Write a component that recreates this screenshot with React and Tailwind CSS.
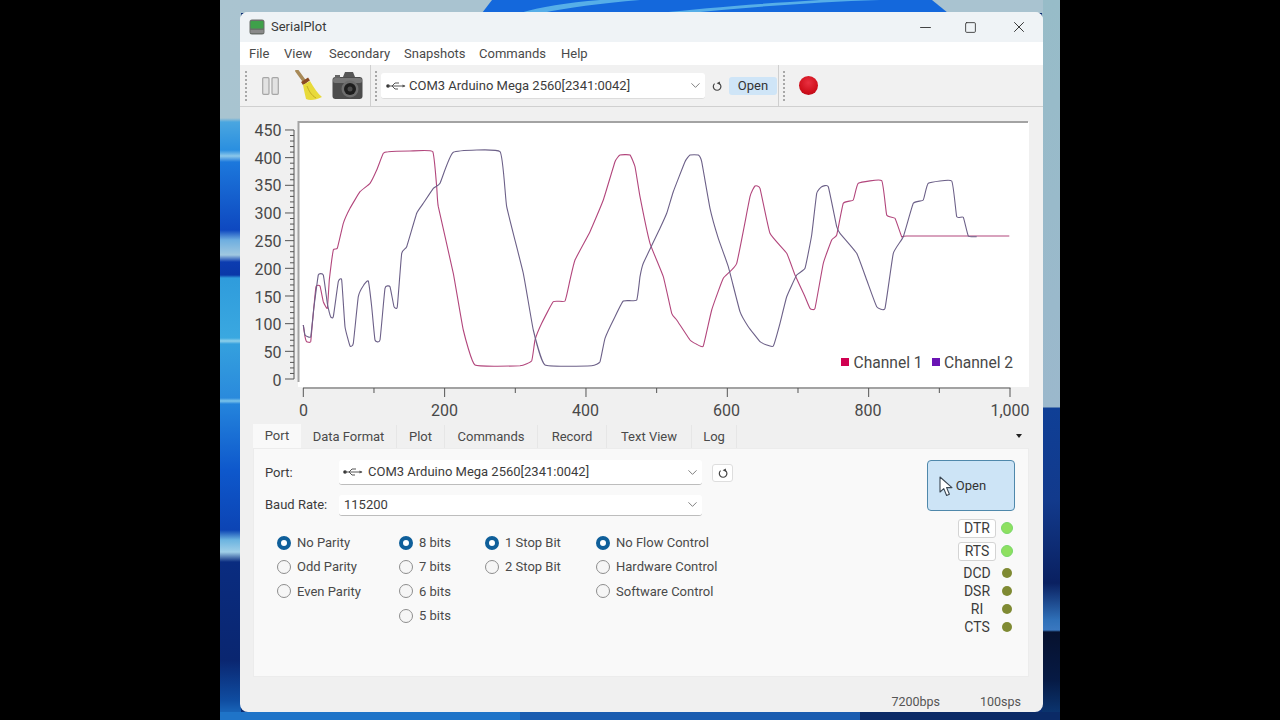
import React from "react";
import { Minus, Square, X, ChevronDown } from "lucide-react";

const z3 = (a) => a.map(([x, y]) => [x / 3 + 240, y / 3 + 120]);
const z4 = (a) => a.map(([x, y]) => [x / 3 + 640, y / 3 + 120]);

function smooth(p) {
  let d = `M${p[0][0].toFixed(1)} ${p[0][1].toFixed(1)}`;
  const k = 0.06;
  for (let i = 0; i < p.length - 1; i++) {
    const a = p[i - 1] || p[i];
    const b = p[i];
    const c = p[i + 1];
    const e = p[i + 2] || c;
    const c1x = b[0] + (c[0] - a[0]) * k;
    const c1y = b[1] + (c[1] - a[1]) * k;
    const c2x = c[0] - (e[0] - b[0]) * k;
    const c2y = c[1] - (e[1] - b[1]) * k;
    d += `C${c1x.toFixed(1)} ${c1y.toFixed(1)} ${c2x.toFixed(1)} ${c2y.toFixed(1)} ${c[0].toFixed(1)} ${c[1].toFixed(1)}`;
  }
  return d;
}

const ch1 = smooth([
  ...z3([[190,615],[195,650],[200,665],[212,665],[218,600],[228,500],[240,498],[250,545],[262,565],[268,480],[280,390],[292,385],[310,310],[330,265],[360,215],[390,190],[410,150],[430,100],[445,95],[510,93],[578,95],[590,200],[595,260],[640,460],[670,630],[705,735],[840,737],[875,722],[885,660],[905,610],[940,545],[975,543],[990,480],[1005,420],[1050,335],[1090,240],[1125,125],[1140,105],[1170,105],[1185,140]]),
  ...z4([[0,230],[30,370],[70,470],[95,580],[110,600],[150,660],[170,673],[190,678],[215,570],[250,475],[290,430],[330,230],[345,198],[360,205],[390,340],[440,400],[465,465],[495,530],[510,565],[525,565],[550,430],[575,360],[590,345],[610,250],[640,240],[655,190],[725,182],[740,285],[765,295],[785,350],[800,348],[1108,348]]),
]);
const ch2 = smooth([
  ...z3([[190,615],[195,645],[212,650],[222,560],[235,465],[250,465],[262,550],[272,590],[280,590],[295,485],[305,480],[315,620],[330,678],[340,670],[355,530],[370,497],[385,483],[395,560],[405,660],[420,660],[435,505],[450,500],[462,560],[472,560],[485,400],[500,380],[530,280],[550,250],[580,205],[600,190],[640,97],[780,95],[800,260],[850,460],[880,630],[915,735],[1055,737],[1080,725],[1095,655],[1125,590],[1150,543],[1190,540]]),
  ...z4([[0,470],[10,430],[60,325],[80,280],[100,215],[135,125],[150,105],[175,105],[185,125],[210,265],[235,355],[265,440],[300,575],[325,620],[360,665],[380,675],[400,678],[420,610],[440,530],[470,465],[495,445],[515,345],[530,220],[545,200],[565,200],[590,320],[600,340],[650,400],[680,480],[710,560],[735,565],[760,400],[790,350],[820,250],[850,240],[865,190],[935,183],[950,290],[970,292],[985,348],[1010,350]]),
]);

const FONT = "Roboto, sans-serif";

function Chart() {
  const yt = [];
  for (let i = 0; i <= 45; i++) {
    const y = 379 - (i * 27.67) / 5;
    yt.push(<line key={i} x1={i % 5 === 0 ? 285 : 290} x2={294} y1={y} y2={y} stroke="#555" strokeWidth="1" />);
  }
  const xt = [];
  for (let i = 0; i <= 10; i++) {
    const x = 303.3 + i * 70.67;
    xt.push(<line key={i} x1={x} x2={x} y1={388} y2={i % 2 === 0 ? 397 : 393} stroke="#555" strokeWidth="1" />);
  }
  return (
    <svg width="803" height="318" viewBox="240 107 803 318" className="block">
      <rect x="298" y="122" width="731" height="265" fill="#fff" />
      <path d="M298.5 382V122H1028" fill="none" stroke="#a3a3a3" strokeWidth="2" />
      <line x1="294" x2="294" y1="130" y2="379" stroke="#555" />
      {yt}
      <line x1="303" x2="1010.5" y1="388" y2="388" stroke="#555" />
      {xt}
      <g fontFamily={FONT} fontSize="16" fill="#484848">
        {[0, 50, 100, 150, 200, 250, 300, 350, 400, 450].map((v, i) => (
          <text key={v} x="281.5" y={380 - i * 27.8 + 6} textAnchor="end">{v}</text>
        ))}
        {[[0, 303.5], [200, 444.5], [400, 585.5], [600, 726.5], [800, 868], [1000, 1010]].map(([v, x]) => (
          <text key={v} x={x} y="416" textAnchor="middle">{v === 1000 ? "1,000" : v}</text>
        ))}
        <text x="853.5" y="368" fontSize="15.6">Channel 1</text>
        <text x="944" y="368" fontSize="15.6">Channel 2</text>
      </g>
      <path d={ch1} fill="none" stroke="#b2467c" strokeWidth="1.1" strokeLinejoin="round" />
      <path d={ch2} fill="none" stroke="#6c6088" strokeWidth="1.1" strokeLinejoin="round" />
      <rect x="841" y="358" width="8" height="8" fill="#d00050" />
      <rect x="932" y="358" width="8" height="8" fill="#6a14b4" />
    </svg>
  );
}

const leftStops = [
  [0,"#aac4d0"],[118,"#a8c4d0"],[122,"#4aa6e0"],[150,"#2a8fe0"],[156,"#8cc8ea"],[162,"#1c78dc"],[230,"#0e48c0"],[240,"#6eaee0"],[255,"#a0c8e0"],[262,"#0c3cb0"],[275,"#0a38a8"],[278,"#2f9cdc"],[338,"#3aa8e0"],[341,"#8fd0ea"],[344,"#34a0de"],[398,"#2a8adc"],[401,"#7cc4ea"],[404,"#2484dc"],[470,"#0e58cc"],[530,"#0c44b4"],[540,"#6cb4e0"],[552,"#a0cfe8"],[562,"#0a2c80"],[660,"#0a2670"],[700,"#0f4ca0"],[720,"#1f74c8"],
];
const rightStops = [
  [0,"#97bcc8"],[407,"#9bb8cc"],[408,"#0f3f96"],[500,"#123a8c"],[583,"#0a2060"],[620,"#2f70b8"],[630,"#3a78c0"],[632,"#06112e"],[680,"#061a44"],[720,"#0c3a78"],
];

function Wallpaper() {
  return (
    <svg width="840" height="720" viewBox="0 0 840 720" className="absolute inset-0">
      <defs>
        <linearGradient id="left" x1="0" y1="0" x2="0" y2="1">
          {leftStops.map(([y, c]) => <stop key={y} offset={y / 720} stopColor={c} />)}
        </linearGradient>
        <linearGradient id="right" x1="0" y1="0" x2="0" y2="1">
          {rightStops.map(([y, c]) => <stop key={y} offset={y / 720} stopColor={c} />)}
        </linearGradient>
      </defs>
      <rect width="840" height="720" fill="#0a2c72" />
      <rect x="0" y="0" width="21" height="720" fill="url(#left)" />
      <rect x="822" y="0" width="18" height="720" fill="url(#right)" />
      <rect x="20" y="0" width="803" height="13" fill="#a9c3d0" />
      <path d="M272 0H712L728 13H262Z" fill="#1468dc" />
      <path d="M300 13Q330 4 380 0H420Q360 5 322 13ZM440 13Q500 6 600 0H660Q570 3 470 13Z" fill="#56aee8" />
      <rect x="0" y="712" width="300" height="8" fill="#1f74c8" />
      <rect x="300" y="712" width="340" height="8" fill="#1a5cb0" />
      <rect x="640" y="712" width="200" height="8" fill="#0b2a66" />
    </svg>
  );
}

function Grip() {
  return <div className="w-[2px] h-[30px] border-l-2 border-dotted border-[#a8a8a8]" />;
}

function Usb({ className }) {
  return (
    <svg width="20" height="10" viewBox="0 0 20 10" className={className}>
      <circle cx="2" cy="5" r="1.8" fill="#333" />
      <path d="M2 5H19M6 5L9 2H13M6 5L9 8H12" stroke="#555" strokeWidth="1" fill="none" />
      <path d="M19.5 5L16.5 3.5V6.5Z" fill="#555" />
    </svg>
  );
}

function Refresh() {
  return (
    <svg width="10" height="10" viewBox="0 0 10 10">
      <path d="M2.6 2.6A3.8 3.8 0 1 0 7.6 2.6" fill="none" stroke="#444" strokeWidth="1.2" />
      <path d="M7.8 0.4L8.2 4L4.6 2.2Z" fill="#444" />
    </svg>
  );
}

function Radio({ label, on }) {
  return (
    <div className="flex items-center h-[24.35px]">
      {on ? (
        <span className="w-[14px] h-[14px] rounded-full border-[4px] border-[#0f5f9a] bg-white shrink-0" />
      ) : (
        <span className="w-[14px] h-[14px] rounded-full border border-[#8e8e8e] bg-[#f6f6f6] shrink-0" />
      )}
      <span className="ml-[6px] text-[13px] text-[#4a4a4a] whitespace-nowrap">{label}</span>
    </div>
  );
}

function Combo({ className, children }) {
  return (
    <div className={`flex items-center bg-white rounded-[3px] ${className}`}>
      <div className="flex-1 flex items-center">{children}</div>
      <ChevronDown size={15} strokeWidth={1.2} className="text-[#555] mr-[2px]" />
    </div>
  );
}

const tabs = [
  ["Port", "w-[48px]"],
  ["Data Format", "w-[96px]"],
  ["Plot", "w-[48px]"],
  ["Commands", "w-[93px]"],
  ["Record", "w-[69px]"],
  ["Text View", "w-[85px]"],
  ["Log", "w-[45px]"],
];

function Signal({ label, button, on }) {
  return (
    <div className={`flex items-center ${button ? "h-[23px]" : "h-[18px]"}`}>
      {button ? (
        <span className="w-[38px] h-[19px] flex items-center justify-center rounded-[3px] border border-[#d4d4d4] bg-white text-[14px] text-[#3c3c3c]">
          {label}
        </span>
      ) : (
        <span className="w-[38px] text-center text-[14px] text-[#3c3c3c]">{label}</span>
      )}
      {on ? (
        <span className="ml-[5px] w-[12px] h-[12px] rounded-full bg-[#8ee060] border border-[#78d86a]" />
      ) : (
        <span className="ml-[6px] w-[10px] h-[10px] rounded-full bg-[#7f8a33]" />
      )}
    </div>
  );
}

export default function App() {
  return (
    <div className="w-[1280px] h-[720px] bg-black flex justify-center overflow-hidden font-['Roboto',sans-serif]">
      <div className="relative w-[840px] h-[720px] pl-[20px] pt-[12px] overflow-hidden">
        <Wallpaper />
        <div className="relative w-[803px] h-[700px] rounded-[8px] overflow-hidden bg-[#f0f0f0] flex flex-col">
          {/* title bar */}
          <div className="h-[30px] bg-[#eff3f6] flex items-center shrink-0">
            <svg width="16" height="16" viewBox="0 0 16 16" className="ml-[9px]">
              <rect x="0.5" y="0.5" width="15" height="15" rx="2.5" fill="#6a6f6a" />
              <rect x="1.5" y="2" width="13" height="7.5" rx="1" fill="#3fa04a" />
              <rect x="1.5" y="11" width="13" height="3" fill="#8a8a8a" />
            </svg>
            <span className="ml-[6px] text-[13px] text-[#3a3a3a]">SerialPlot</span>
            <div className="ml-auto flex items-center">
              <Minus size={17} strokeWidth={1.3} className="text-[#333] mr-[30px]" />
              <Square size={13} strokeWidth={1.6} className="text-[#333] mr-[33px]" />
              <X size={18} strokeWidth={1.3} className="text-[#333] mr-[15px]" />
            </div>
          </div>
          {/* menu */}
          <div className="h-[23px] bg-white flex items-center pl-[9px] pt-[1px] text-[13px] text-[#4a4a4a] shrink-0">
            <span className="w-[35px]">File</span>
            <span className="w-[45px]">View</span>
            <span className="w-[75px]">Secondary</span>
            <span className="w-[75px]">Snapshots</span>
            <span className="w-[82px]">Commands</span>
            <span>Help</span>
          </div>
          {/* toolbar */}
          <div className="h-[42px] bg-[#f1f1f1] border-b border-[#d0d0d0] flex items-center pl-[5px] shrink-0">
            <Grip />
            <svg width="17" height="18" viewBox="0 0 17 18" className="ml-[15px]">
              <rect x="0.7" y="0.7" width="6.3" height="16.6" rx="1" fill="#e2e2e2" stroke="#a6a6a6" strokeWidth="1.2" />
              <rect x="10" y="0.7" width="6.3" height="16.6" rx="1" fill="#e2e2e2" stroke="#a6a6a6" strokeWidth="1.2" />
            </svg>
            <svg width="28" height="31" viewBox="0 0 28 31" className="ml-[16px]">
              <path d="M2 1L10 12" stroke="#a88a58" strokeWidth="3.6" strokeLinecap="round" />
              <path d="M7 13.5L14 9" stroke="#8c4a22" strokeWidth="3.4" />
              <path d="M8 15L15 11C19 18 23 24 27 27C21 30 15 31 11 29C10 25 9 20 8 15Z" fill="#e8da3a" />
              <path d="M12 16C14 21 16 25 21 28" stroke="#c4aa22" strokeWidth="1" fill="none" />
            </svg>
            <svg width="31" height="29" viewBox="0 0 31 29" className="ml-[9px]">
              <path d="M11 6L13 1H21L23 6Z" fill="#555" />
              <rect x="0.5" y="6" width="30" height="22" rx="3" fill="#4c4c4c" />
              <rect x="1" y="7" width="29" height="5" rx="2" fill="#777" />
              <rect x="3" y="4" width="5" height="3" fill="#666" />
              <circle cx="18" cy="18" r="8.5" fill="#6d6d6d" />
              <circle cx="18" cy="18" r="6" fill="#1d1d1d" />
              <circle cx="18" cy="18" r="2.5" fill="#4a4a4a" />
            </svg>
            <div className="ml-[7px] w-px h-[42px] bg-[#cfcfcf]" />
            <div className="ml-[4px]"><Grip /></div>
            <Combo className="ml-[4px] w-[324px] h-[26px] mt-[1px] border-b border-[#dcdcdc]">
              <Usb className="ml-[5px]" />
              <span className="ml-[3px] text-[13px] text-[#3c3c3c] whitespace-nowrap">COM3 Arduino Mega 2560[2341:0042]</span>
            </Combo>
            <div className="ml-[7px] w-[10px] flex"><Refresh /></div>
            <div className="ml-[7px] w-[48px] h-[18px] flex items-center justify-center rounded-[3px] bg-[#cfe5f7] text-[13px] text-[#333]">
              Open
            </div>
            <div className="ml-[1px] w-px h-[42px] bg-[#cfcfcf]" />
            <div className="ml-[4px]"><Grip /></div>
            <span className="ml-[14px] w-[19px] h-[19px] rounded-full bg-[radial-gradient(circle_at_50%_35%,#e83040,#d0101c_60%,#a80818)]" />
          </div>
          {/* plot */}
          <div className="h-[318px] shrink-0">
            <Chart />
          </div>
          {/* tabs + panel */}
          <div className="pl-[13px] pr-[14px] flex flex-col">
            <div className="h-[23px] flex items-stretch relative">
              {tabs.map(([t, w], i) => (
                <div
                  key={t}
                  className={`${w} flex items-center justify-center text-[13px] text-[#4a4a4a] ${i === 0 ? "bg-[#f9f9f9] -mt-[1px]" : "border-r border-[#e6e6e6]"}`}
                >
                  {t}
                </div>
              ))}
              <span className="absolute right-[7px] top-[9px] w-0 h-0 border-l-[3px] border-r-[3px] border-t-[4px] border-l-transparent border-r-transparent border-t-[#222]" />
            </div>
            <div className="h-[229px] bg-[#f9f9f9] border border-[#ececec] flex pl-[11px]">
              <div className="w-[662px] flex flex-col">
                <div className="flex items-center mt-[11px] h-[25px]">
                  <span className="w-[74px] text-[13px] text-[#3c3c3c]">Port:</span>
                  <Combo className="w-[363px] h-[25px] border-b border-[#bdbdbd]">
                    <Usb className="ml-[4px]" />
                    <span className="ml-[5px] text-[13px] text-[#3c3c3c] whitespace-nowrap">COM3 Arduino Mega 2560[2341:0042]</span>
                  </Combo>
                  <div className="ml-[10px] w-[21px] h-[18px] flex items-center justify-center rounded-[3px] bg-white border border-[#dedede]">
                    <Refresh />
                  </div>
                </div>
                <div className="flex items-center mt-[10px] h-[20px]">
                  <span className="w-[74px] text-[13px] text-[#3c3c3c] whitespace-nowrap">Baud Rate:</span>
                  <Combo className="w-[363px] h-[21px] border-b border-[#bdbdbd]">
                    <span className="ml-[5px] text-[13px] text-[#3c3c3c]">115200</span>
                  </Combo>
                </div>
                <div className="flex mt-[15.5px] pl-[12px]">
                  <div className="w-[122px] flex flex-col">
                    <Radio label="No Parity" on />
                    <Radio label="Odd Parity" />
                    <Radio label="Even Parity" />
                  </div>
                  <div className="w-[86px] flex flex-col">
                    <Radio label="8 bits" on />
                    <Radio label="7 bits" />
                    <Radio label="6 bits" />
                    <Radio label="5 bits" />
                  </div>
                  <div className="w-[111px] flex flex-col">
                    <Radio label="1 Stop Bit" on />
                    <Radio label="2 Stop Bit" />
                  </div>
                  <div className="flex flex-col">
                    <Radio label="No Flow Control" on />
                    <Radio label="Hardware Control" />
                    <Radio label="Software Control" />
                  </div>
                </div>
              </div>
              <div className="flex flex-col items-end w-[88px]">
                <div className="relative mt-[11px] w-[88px] h-[51px] rounded-[4px] bg-[#cde4f6] border-[1.5px] border-[#4f88ab] flex items-center justify-center text-[13px] text-[#333]">
                  Open
                  <svg width="15" height="21" viewBox="0 0 15 21" className="absolute left-[11px] top-[15px]">
                    <path d="M1 1V16L4.8 12.6L7.6 19.5L10.4 18.3L7.6 11.6H13Z" fill="#fff" stroke="#3a4652" strokeWidth="1.1" strokeLinejoin="round" />
                  </svg>
                </div>
                <div className="mt-[5.5px] flex flex-col items-start w-[57px]">
                  <Signal label="DTR" button on />
                  <Signal label="RTS" button on />
                  <div className="h-[1.5px]" />
                  <Signal label="DCD" />
                  <Signal label="DSR" />
                  <Signal label="RI" />
                  <Signal label="CTS" />
                </div>
              </div>
            </div>
          </div>
          {/* status */}
          <div className="flex-1 flex items-end justify-end pr-[22px] text-[12.5px] text-[#555]">
            <span>7200bps</span>
            <span className="ml-[40px]">100sps</span>
          </div>
        </div>
      </div>
    </div>
  );
}
